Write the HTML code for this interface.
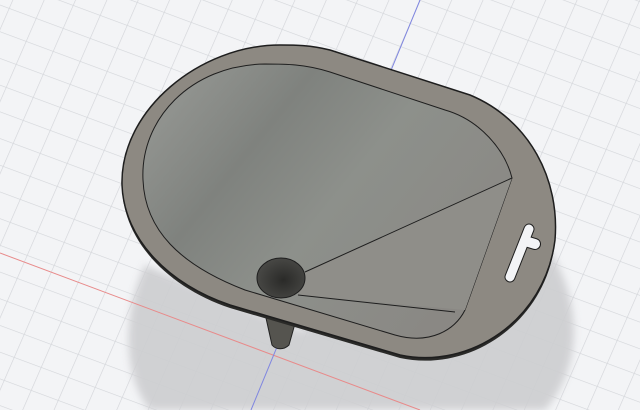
<!DOCTYPE html>
<html><head><style>html,body{margin:0;padding:0;width:640px;height:410px;overflow:hidden;background:#f3f4f6}svg{display:block;overflow:hidden}</style></head>
<body>
<svg width="640" height="410" viewBox="0 0 640 410" xmlns="http://www.w3.org/2000/svg">
<defs>
<pattern id="g" width="20" height="20" patternUnits="userSpaceOnUse" patternTransform="matrix(1.35 0.5 -0.5 1.15 420 0)">
<path d="M0 0H20M0 0V20" stroke="#d3d5d9" stroke-width="0.9" fill="none"/>
</pattern>
<filter id="b" x="-20%" y="-20%" width="140%" height="140%"><feGaussianBlur stdDeviation="4"/></filter>
<linearGradient id="in" x1="0" y1="0" x2="1" y2="0.6">
<stop offset="0" stop-color="#9a9c98"/><stop offset="0.35" stop-color="#7f827e"/><stop offset="0.6" stop-color="#8d908b"/><stop offset="1" stop-color="#8a8884"/>
</linearGradient>
<radialGradient id="h" cx="0.55" cy="0.55" r="0.6"><stop offset="0" stop-color="#2a2a28"/><stop offset="1" stop-color="#4a4a47"/></radialGradient>
</defs>
<rect width="640" height="410" fill="#f3f4f6"/>
<rect width="640" height="410" fill="url(#g)"/>
<g filter="url(#b)" opacity="0.9">
<path d="M145 265 C120 320 125 380 150 410 L545 410 C580 370 585 310 550 250 L300 330 Z" fill="#cdced0"/>
</g>
<line x1="0" y1="253" x2="420" y2="410" stroke="#e88a8a" stroke-width="1"/>
<line x1="420" y1="0" x2="251" y2="410" stroke="#7f86e0" stroke-width="1"/>
<path d="M266 318 L272 345 C276 350 284 350 289 345 L296 320 Z" fill="#55544f" stroke="#222" stroke-width="1"/>
<path d="M280 48 C200 48 120 112 122 188 C124 243 170 288 230 308 L400 358 C470 373 545 323 555 243 C560 183 530 123 470 98 L330 53 C310 48 295 48 280 48 Z" fill="#2a2a28"/>
<path d="M280 45 C200 45 120 110 122 185 C124 240 170 285 230 305 L400 355 C470 370 545 320 555 240 C560 180 530 120 470 95 L330 50 C310 45 295 45 280 45 Z" fill="#8d8982" stroke="#1e1e1e" stroke-width="1.5"/>
<path d="M265 64 C190 65 140 120 143 180 C145 230 180 265 245 290 L395 335 C430 345 455 330 465 310 L512 178 C505 150 480 120 445 110 L330 72 C305 64 285 64 265 64 Z" fill="url(#in)" stroke="#1e1e1e" stroke-width="1"/>
<path d="M305 272 L512 178 L465 310 L298 295 Z" fill="#8f8e89"/>
<path d="M305 272 L512 178 M298 295 L455 312" stroke="#1e1e1e" stroke-width="1" fill="none"/>
<ellipse cx="281" cy="278" rx="24" ry="20" fill="url(#h)" stroke="#1e1e1e" stroke-width="1"/>
<g stroke-linecap="round">
<line x1="529" y1="229" x2="510" y2="277" stroke="#1e1e1e" stroke-width="11"/>
<line x1="525" y1="241" x2="535" y2="244" stroke="#1e1e1e" stroke-width="12"/>
<line x1="529" y1="229" x2="510" y2="277" stroke="#f3f4f6" stroke-width="9"/>
<line x1="525" y1="241" x2="535" y2="244" stroke="#f3f4f6" stroke-width="10"/>
</g>
</svg>
</body></html>
